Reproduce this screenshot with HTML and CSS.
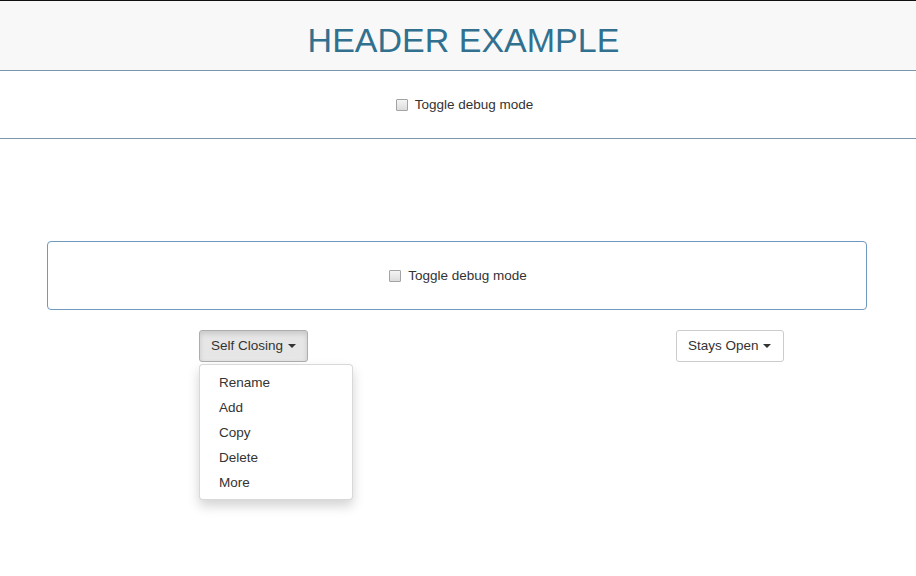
FILE: index.html
```html
<!DOCTYPE html>
<html>
<head>
<meta charset="utf-8">
<title>Header Example</title>
<link rel="stylesheet" href="styles.css">
</head>
<body>
<header class="page-header">
  <h1 class="title">HEADER EXAMPLE</h1>
</header>
<section class="debug-bar">
  <label class="toggle"><input type="checkbox" class="check"><span>Toggle debug mode</span></label>
</section>
<div class="panel">
  <label class="toggle"><input type="checkbox" class="check"><span>Toggle debug mode</span></label>
</div>
<div class="button-row">
  <div class="dropdown">
    <button class="btn btn-active">Self Closing <span class="caret"></span></button>
    <ul class="menu">
      <li>Rename</li>
      <li>Add</li>
      <li>Copy</li>
      <li>Delete</li>
      <li>More</li>
    </ul>
  </div>
  <div class="dropdown">
    <button class="btn btn-open">Stays Open <span class="caret"></span></button>
  </div>
</div>
</body>
</html>
```
FILE: styles.css
```css
html, body {
  margin: 0;
  padding: 0;
  background: #fff;
}
body {
  font-family: "Liberation Sans", Arial, Helvetica, sans-serif;
  font-size: 13.5px;
  color: #333;
  border-top: 1px solid #111;
}
.page-header {
  height: 70px;
  background: #f8f8f8;
  border-bottom: 1px solid #7a97ae;
  box-sizing: border-box;
  padding: 19px 0 0 11px;
  text-align: center;
}
.title {
  margin: 0;
  font-weight: normal;
  font-size: 34px;
  line-height: 40px;
  color: #31708f;
}
.debug-bar {
  height: 67px;
  border-bottom: 1px solid #7a97ae;
  display: flex;
  align-items: center;
  justify-content: center;
  padding-left: 13px;
}
.toggle {
  display: flex;
  align-items: center;
  gap: 7px;
  line-height: 19px;
}
.check {
  appearance: none;
  -webkit-appearance: none;
  margin: 0;
  width: 12px;
  height: 12px;
  border: 1px solid #a3a3a3;
  border-radius: 1px;
  background: linear-gradient(#f4f4f4, #dcdcdc);
  box-sizing: border-box;
}
.panel {
  margin: 102px 49px 0 47px;
  height: 69px;
  box-sizing: border-box;
  border: 1px solid #7099bf;
  border-radius: 4px;
  display: flex;
  align-items: center;
  justify-content: center;
  padding-left: 2px;
}
.button-row {
  display: flex;
  align-items: flex-start;
  gap: 323px;
  padding-left: 199px;
  margin-top: 20px;
  padding-bottom: 20px;
}
.dropdown {
  display: flex;
  flex-direction: column;
  align-items: flex-start;
  gap: 2px;
}
.btn {
  font-family: inherit;
  font-size: 13.5px;
  color: #333;
  height: 32px;
  box-sizing: border-box;
  border-radius: 3px;
  padding: 0 11px;
  line-height: 30px;
  cursor: pointer;
  white-space: nowrap;
  text-align: left;
}
.btn-active {
  width: 109px;
  background: #e6e6e6;
  border: 1px solid #adadad;
  box-shadow: inset 0 3px 5px rgba(0, 0, 0, 0.125);
}
.btn-open {
  width: 108px;
  background: #fff;
  border: 1px solid #ccc;
}
.caret {
  display: inline-block;
  width: 0;
  height: 0;
  margin-left: 1px;
  vertical-align: middle;
  border-top: 4px solid #333;
  border-left: 4px solid transparent;
  border-right: 4px solid transparent;
}
.menu {
  width: 154px;
  box-sizing: border-box;
  margin: 0;
  padding: 5px 0 4px;
  list-style: none;
  background: #fff;
  border: 1px solid rgba(0, 0, 0, 0.15);
  border-radius: 4px;
  box-shadow: 0 6px 12px rgba(0, 0, 0, 0.175);
}
.menu li {
  height: 25px;
  line-height: 25px;
  padding: 0 19px;
  color: #333;
}
```
